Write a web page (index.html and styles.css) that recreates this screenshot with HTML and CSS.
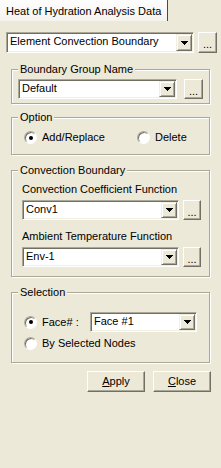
FILE: index.html
```html
<!DOCTYPE html>
<html lang="en">
<head>
    <meta charset="UTF-8">
    <title>Heat of Hydration Analysis Data</title>
    <link rel="stylesheet" href="styles.css">
</head>
<body>
    <div class="tabs">
        <div class="tab">Heat of Hydration Analysis Data</div>
    </div>

    <div class="top-row">
        <div class="combo">
            <span class="value">Element Convection Boundary</span>
            <span class="drop"><svg width="7" height="4"><path d="M0 0h7v1H0zM1 1h5v1H1zM2 2h3v1H2zM3 3h1v1H3z"/></svg></span>
        </div>
        <button class="dots">...</button>
    </div>

    <fieldset class="group grp-name">
        <legend>Boundary Group Name</legend>
        <div class="line">
            <div class="combo">
                <span class="value">Default</span>
                <span class="drop"><svg width="7" height="4"><path d="M0 0h7v1H0zM1 1h5v1H1zM2 2h3v1H2zM3 3h1v1H3z"/></svg></span>
            </div>
            <button class="dots">...</button>
        </div>
    </fieldset>

    <fieldset class="group grp-option">
        <legend>Option</legend>
        <div class="radios">
            <div class="radio on"><span class="dot"></span>Add/Replace</div>
            <div class="radio"><span class="dot"></span>Delete</div>
        </div>
    </fieldset>

    <fieldset class="group grp-conv">
        <legend>Convection Boundary</legend>
        <div class="field">
            <div class="label">Convection Coefficient Function</div>
            <div class="line">
                <div class="combo">
                    <span class="value">Conv1</span>
                    <span class="drop"><svg width="7" height="4"><path d="M0 0h7v1H0zM1 1h5v1H1zM2 2h3v1H2zM3 3h1v1H3z"/></svg></span>
                </div>
                <button class="dots">...</button>
            </div>
        </div>
        <div class="field">
            <div class="label">Ambient Temperature Function</div>
            <div class="line">
                <div class="combo">
                    <span class="value">Env-1</span>
                    <span class="drop"><svg width="7" height="4"><path d="M0 0h7v1H0zM1 1h5v1H1zM2 2h3v1H2zM3 3h1v1H3z"/></svg></span>
                </div>
                <button class="dots">...</button>
            </div>
        </div>
    </fieldset>

    <fieldset class="group grp-sel">
        <legend>Selection</legend>
        <div class="face-row">
            <div class="radio on"><span class="dot"></span>Face# :</div>
            <div class="combo face">
                <span class="value">Face #1</span>
                <span class="drop"><svg width="7" height="4"><path d="M0 0h7v1H0zM1 1h5v1H1zM2 2h3v1H2zM3 3h1v1H3z"/></svg></span>
            </div>
        </div>
        <div class="radio"><span class="dot"></span>By Selected Nodes</div>
    </fieldset>

    <div class="actions">
        <button class="btn"><u>A</u>pply</button>
        <button class="btn"><u>C</u>lose</button>
    </div>
</body>
</html>
```

FILE: styles.css
```css
* {
    margin: 0;
    padding: 0;
    box-sizing: border-box;
}
html, body {
    width: 100%;
    height: 100%;
}
body {
    background-color: #ece9d8;
    font-family: "Liberation Sans", Arial, sans-serif;
    font-size: 11px;
    line-height: 13px;
    color: #000;
}

/* tab strip */
.tabs {
    height: 21px;
}
.tab {
    width: 168px;
    height: 21px;
    padding: 5px 0 0 6px;
    background: linear-gradient(#fefefe, #f4f3ee);
    border-right: 1px solid #4a4a4a;
}

/* combo box */
.combo {
    display: flex;
    height: 20px;
    padding: 1px;
    background-color: #fff;
    border: 1px solid;
    border-color: #aca899 #fff #fff #aca899;
    box-shadow: inset 1px 1px 0 #716f64, inset -1px -1px 0 #f1efe2;
}
.combo .value {
    flex: 1;
    padding: 1px 0 0 2px;
    white-space: nowrap;
    overflow: hidden;
}
.drop {
    width: 16px;
    display: flex;
    align-items: center;
    justify-content: center;
    background-color: #ece9d8;
    border: 1px solid;
    border-color: #f1efe2 #716f64 #716f64 #f1efe2;
    box-shadow: inset 1px 1px 0 #fff, inset -1px -1px 0 #aca899;
}
.drop svg {
    display: block;
}

/* buttons */
.dots, .btn {
    font: inherit;
    color: #000;
    background-color: #ece9d8;
    border: 1px solid;
    border-color: #fff #716f64 #716f64 #fff;
    box-shadow: inset -1px -1px 0 #aca899;
}
.dots {
    width: 19px;
    height: 20px;
    flex: none;
    padding-top: 4px;
    line-height: 13px;
}
.btn {
    width: 58px;
    height: 21px;
}
.btn u {
    text-decoration: underline;
}

.top-row {
    display: flex;
    gap: 4px;
    height: 21px;
    margin-top: 11px;
    padding: 0 4px 0 6px;
}
.top-row .combo {
    flex: 1;
    height: 21px;
}
.top-row .dots {
    height: 21px;
}

/* group boxes */
.group {
    margin: 9px 11px 0;
    padding: 3px 6px 4px;
    min-width: 0;
    border: 1px solid #aca899;
    box-shadow: 1px 1px 0 #fff, inset 1px 1px 0 #fff;
}
.group legend {
    padding: 0 2px;
    background-color: #ece9d8;
}
.line {
    display: flex;
    gap: 7px;
}
.line .combo {
    flex: 1;
}

.grp-name {
    margin-top: 10px;
}

.grp-option {
    margin-top: 7px;
    padding: 7px 6px 10px;
}
.radios {
    display: grid;
    grid-template-columns: 113px auto;
    padding-left: 6px;
}
.radio {
    display: flex;
    align-items: center;
    gap: 5px;
    height: 13px;
}
.dot {
    width: 13px;
    height: 13px;
    display: flex;
    align-items: center;
    justify-content: center;
    border-radius: 50%;
    background-color: #fff;
    border: 1px solid;
    border-color: #aca899 #fff #fff #aca899;
    box-shadow: inset 1px 1px 0 #716f64;
}
.radio.on .dot::after {
    content: "";
    width: 4px;
    height: 4px;
    border-radius: 50%;
    background-color: #000;
}

.grp-conv {
    padding: 6px 6px 9px;
}
.field {
    padding: 0 2px 0 4px;
}
.field + .field {
    margin-top: 10px;
}
.field .label {
    margin-bottom: 4px;
}
.field .line {
    gap: 4px;
}
.field .dots {
    width: 18px;
}

.grp-sel {
    padding: 13px 6px 12px;
}
.grp-sel .radio {
    margin-left: 6px;
}
.face-row {
    display: flex;
    align-items: center;
    margin-bottom: 5px;
}
.face-row .radio {
    width: 66px;
}
.combo.face {
    width: 107px;
}

.actions {
    display: flex;
    justify-content: flex-end;
    gap: 8px;
    margin-top: 8px;
    padding-right: 10px;
}
```
